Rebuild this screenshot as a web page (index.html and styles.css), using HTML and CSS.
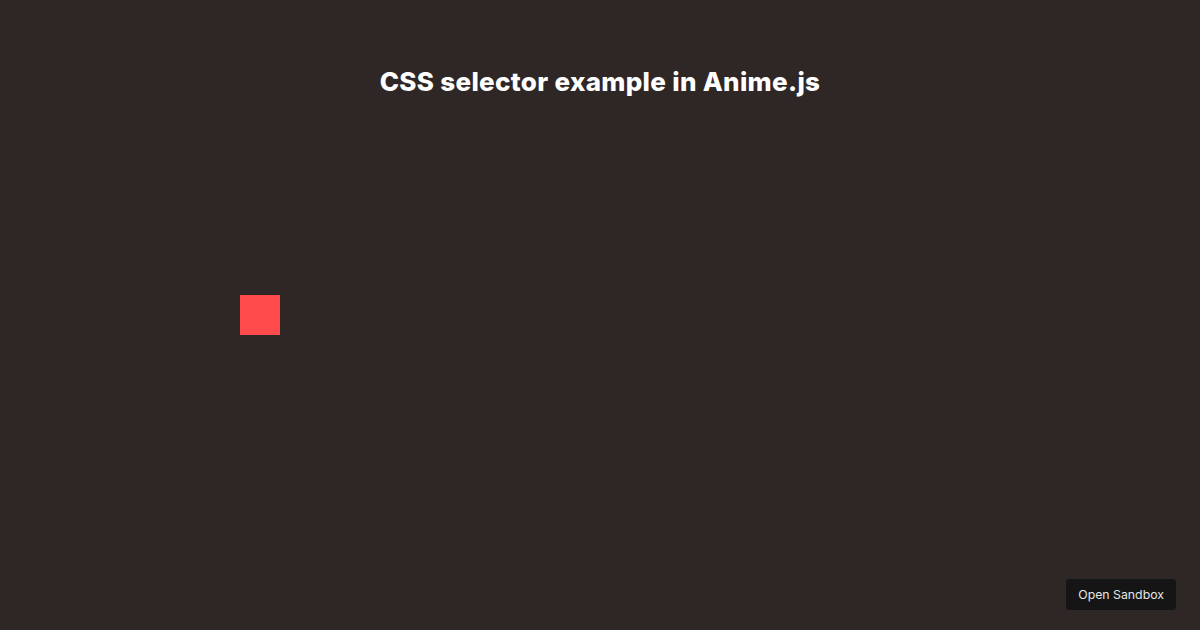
FILE: index.html
```html
<!DOCTYPE html>
<html>
<head>
<meta charset="utf-8">
<link rel="stylesheet" href="styles.css">
</head>
<body>
<main class="page">
  <h1 class="title">CSS selector example in Anime.js</h1>
  <div class="stage">
    <div class="square"></div>
  </div>
</main>
<a class="sandbox-btn">Open Sandbox</a>
</body>
</html>
```
FILE: styles.css
```css
html, body {
  margin: 0;
  padding: 0;
  background: #2f2626;
  width: 1200px;
  height: 630px;
  overflow: hidden;
}
.page {
  display: flex;
  flex-direction: column;
  height: 630px;
}
.title {
  margin: 0;
  padding-top: 66px;
  text-align: center;
  color: #ffffff;
  font-family: Inter, "Open Sans", sans-serif;
  font-weight: 800;
  font-size: 26px;
  line-height: 32px;
  letter-spacing: 0.32px;
}
.stage {
  padding-top: 197px;
  padding-left: 240px;
}
.square {
  width: 40px;
  height: 40px;
  background: #ff4b4b;
}
.sandbox-btn {
  position: fixed;
  right: 23px;
  bottom: 19px;
  box-sizing: border-box;
  height: 33px;
  padding: 0 12px;
  display: flex;
  align-items: center;
  background: #151515;
  border: 1px solid #2a2a2a;
  border-radius: 4px;
  color: #e6e6e6;
  font-family: Inter, "Liberation Sans", sans-serif;
  font-size: 12.3px;
}
```
